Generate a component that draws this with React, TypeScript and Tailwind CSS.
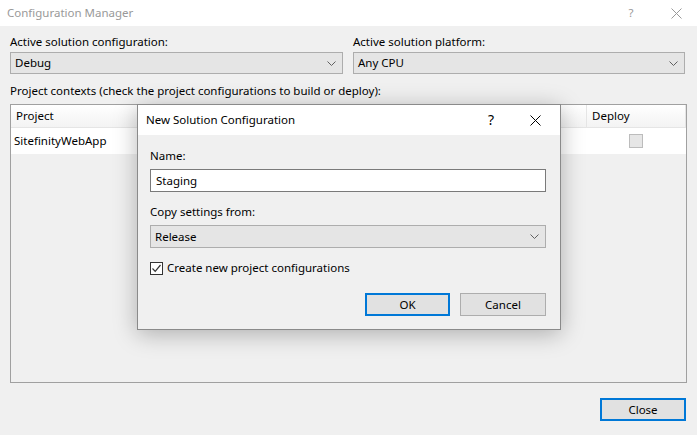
import React from 'react';

function Chevron() {
  return (
    <svg width="9" height="5" viewBox="0 0 9 5" className="shrink-0">
      <path d="M0.5 0.5 L4.5 4.5 L8.5 0.5" fill="none" stroke="#606060" strokeWidth="1" />
    </svg>
  );
}

function CloseGlyph({ color = '#000' }: { color?: string }) {
  return (
    <svg width="11" height="11" viewBox="0 0 11 11">
      <path d="M0.5 0.5 L10.5 10.5 M10.5 0.5 L0.5 10.5" stroke={color} strokeWidth="1" />
    </svg>
  );
}

function Combo({ value, className = '' }: { value: string; className?: string }) {
  return (
    <div className={`h-[22px] flex items-center justify-between pl-[4px] pr-[6px] bg-[#e5e5e5] border border-[#adadad] ${className}`}>
      <span>{value}</span>
      <Chevron />
    </div>
  );
}

function Button({ label, primary = false, className = '' }: { label: string; primary?: boolean; className?: string }) {
  return (
    <div
      className={`h-[23px] flex items-center justify-center bg-[#e1e1e1] ${primary ? 'border-2 border-[#0078d7]' : 'border border-[#adadad]'} ${className}`}
    >
      {label}
    </div>
  );
}

export default function App() {
  return (
    <div
      className="relative w-[697px] h-[435px] bg-[#f0f0f0] text-[11.5px] leading-[16px] text-black overflow-hidden"
      style={{ fontFamily: '"Noto Sans", "Open Sans", sans-serif' }}
    >
      {/* Window title */}
      <div className="h-[26px] bg-white flex items-center pl-[7px] pr-[15px] text-[#999]">
        <span className="flex-1">Configuration Manager</span>
        <span className="w-[14px] text-center mr-[33px] text-[#999]">?</span>
        <CloseGlyph color="#999" />
      </div>

      <div className="px-[10px] pt-[8px]">
        {/* Active config / platform */}
        <div className="flex gap-[10px]">
          <div className="w-[333px] flex flex-col gap-[2px]">
            <span>Active solution configuration:</span>
            <Combo value="Debug" />
          </div>
          <div className="w-[332px] flex flex-col gap-[2px]">
            <span>Active solution platform:</span>
            <Combo value="Any CPU" />
          </div>
        </div>

        <div className="mt-[9px]">Project contexts (check the project configurations to build or deploy):</div>

        {/* Project grid */}
        <div className="mt-[5px] h-[279px] border border-[#a0a0a0] flex flex-col">
          <div className="h-[23px] flex bg-gradient-to-b from-[#ffffff] to-[#f3f3f3] border-b border-[#e5e5e5]">
            <div className="flex-1 flex items-center pl-[5px]">Project</div>
            <div className="w-[100px] flex items-center pl-[5px] border-l border-[#e5e5e5] border-r">Deploy</div>
          </div>
          <div className="h-[26px] flex bg-white">
            <div className="flex-1 flex items-center pl-[3px]">SitefinityWebApp</div>
            <div className="w-[100px] flex items-center justify-center">
              <div className="w-[14px] h-[14px] bg-[#e6e6e6] border border-[#bcbcbc]" />
            </div>
          </div>
        </div>

        <div className="flex justify-end mt-[15px] pr-[1px]">
          <Button label="Close" primary className="w-[86px]" />
        </div>
      </div>

      {/* New Solution Configuration dialog */}
      <div className="absolute left-[137px] top-[104px] w-[424px] h-[226px] border border-[#8a8a8a] bg-[#f0f0f0] shadow-[0_4px_22px_rgba(0,0,0,0.28)] flex flex-col">
        <div className="h-[30px] bg-white flex items-center pl-[8px] pr-[19px]">
          <span className="flex-1">New Solution Configuration</span>
          <span className="w-[14px] text-center mr-[32px] text-[14px]">?</span>
          <CloseGlyph />
        </div>
        <div className="pl-[12px] pr-[14px] pt-[13px] flex flex-col">
          <span>Name:</span>
          <div className="mt-[5px] h-[23px] bg-white border border-[#7a7a7a] flex items-center pl-[5px]">Staging</div>
          <span className="mt-[12px]">Copy settings from:</span>
          <Combo value="Release" className="mt-[5px] h-[23px]" />
          <div className="mt-[12px] flex items-center gap-[4px]">
            <div className="w-[13px] h-[13px] border border-[#333] bg-white flex items-center justify-center">
              <svg width="11" height="11" viewBox="0 0 11 11">
                <path d="M1.5 5.5 L4.2 8.3 L9.5 2" fill="none" stroke="#333" strokeWidth="1.2" />
              </svg>
            </div>
            <span>Create new project configurations</span>
          </div>
          <div className="mt-[17px] flex justify-end gap-[10px]">
            <Button label="OK" primary className="w-[85px]" />
            <Button label="Cancel" className="w-[86px]" />
          </div>
        </div>
      </div>
    </div>
  );
}
